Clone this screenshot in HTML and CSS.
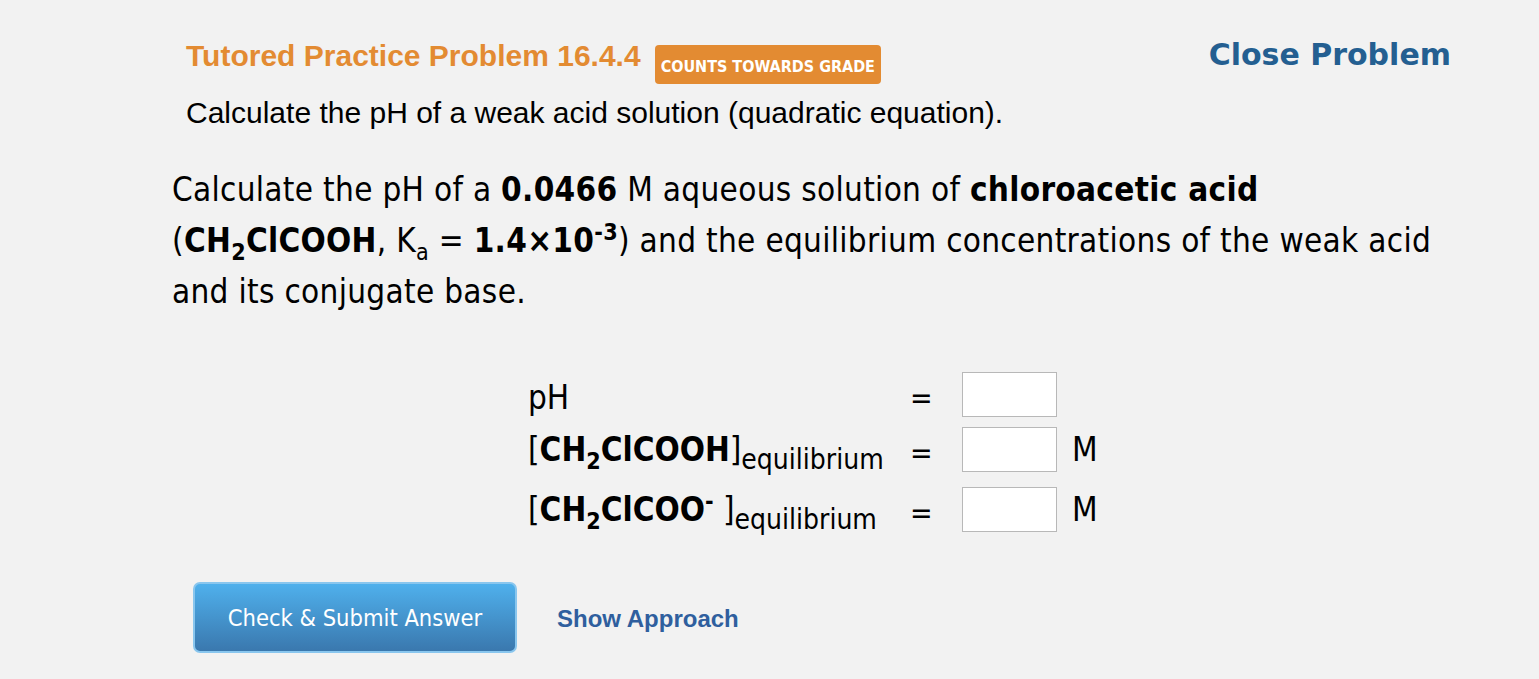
FILE: index.html
```html
<!DOCTYPE html>
<html lang="en">
<head>
    <meta charset="UTF-8">
    <meta name="viewport" content="width=device-width, initial-scale=1.0">
    <title>Tutored Practice Problem 16.4.4</title>
    <link rel="stylesheet" href="styles.css">
</head>
<body>
    <div class="page">
        <div class="header">
            <div class="header-left">
                <div class="title-row">
                    <h1 class="title">Tutored Practice Problem 16.4.4</h1>
                    <span class="badge">COUNTS TOWARDS GRADE</span>
                </div>
                <p class="subtitle">Calculate the pH of a weak acid solution (quadratic equation).</p>
            </div>
            <a class="close-link" href="#">Close Problem</a>
        </div>

        <p class="problem">
            Calculate the pH of a <b>0.0466</b> M aqueous solution of <b>chloroacetic acid</b>
            (<b>CH<sub>2</sub>ClCOOH</b>, K<sub>a</sub> = <b>1.4&times;10<sup>-3</sup></b>) and the equilibrium concentrations of the weak acid
            and its conjugate base.
        </p>

        <div class="answers">
            <div class="answer-row first">
                <span class="label">pH</span>
                <span class="eq">=</span>
                <input type="text" class="answer-box">
                <span class="unit"></span>
            </div>
            <div class="answer-row">
                <span class="label">[<b>CH<sub>2</sub>ClCOOH</b>]<sub class="eqm">equilibrium</sub></span>
                <span class="eq">=</span>
                <input type="text" class="answer-box">
                <span class="unit">M</span>
            </div>
            <div class="answer-row last">
                <span class="label">[<b>CH<sub>2</sub>ClCOO<sup>-</sup></b> ]<sub class="eqm">equilibrium</sub></span>
                <span class="eq">=</span>
                <input type="text" class="answer-box">
                <span class="unit">M</span>
            </div>
        </div>

        <div class="actions">
            <button class="submit-btn">Check &amp; Submit Answer</button>
            <a class="approach-link" href="#">Show Approach</a>
        </div>
    </div>
</body>
</html>
```

FILE: styles.css
```css
body {
    margin: 0;
    padding: 0;
    background-color: #f2f2f2;
    font-family: "Liberation Sans", Arial, sans-serif;
    color: #000;
}

.page {
    padding: 39px 88px 0 172px;
}

.header {
    display: flex;
    justify-content: space-between;
    align-items: flex-start;
    padding-left: 14px;
}

.title-row {
    display: flex;
    align-items: flex-start;
    gap: 14px;
}

.title {
    margin: 0;
    font-size: 30px;
    font-weight: bold;
    color: #e38b32;
}

.badge {
    display: flex;
    align-items: center;
    height: 39px;
    box-sizing: border-box;
    padding: 3px 6px 0;
    margin-top: 6px;
    background-color: #e38b32;
    color: white;
    font-family: "DejaVu Sans Condensed", "DejaVu Sans", sans-serif;
    font-weight: bold;
    font-size: 16px;
    border-radius: 4px;
}

.subtitle {
    margin: 12px 0 0;
    font-size: 30px;
}

.close-link {
    font-family: "DejaVu Sans", Verdana, sans-serif;
    font-weight: bold;
    font-size: 30px;
    color: #245f91;
    text-decoration: none;
    margin-top: -2px;
}

.problem {
    width: 1274px;
    font-family: "DejaVu Sans Condensed", "DejaVu Sans", sans-serif;
    font-size: 33px;
    letter-spacing: 0.3px;
    line-height: 51px;
    margin: 34px 0 0;
}

.problem sub,
.problem sup,
.label sub,
.label sup {
    font-size: 70%;
    line-height: 0;
}

.answers {
    margin: 50px 0 0 356px;
    font-family: "DejaVu Sans Condensed", "DejaVu Sans", sans-serif;
    font-size: 33px;
}

.answer-row {
    display: grid;
    grid-template-columns: 382px 52px 95px 60px;
    align-items: center;
    height: 55px;
}

.answer-row.first .label {
    padding-top: 5px;
}

.answer-row.last {
    margin-top: 5px;
}

.label .eqm {
    font-size: 28px;
}

.eq {
    font-size: 30px;
    padding-top: 6px;
}

.answer-box {
    width: 95px;
    height: 45px;
    box-sizing: border-box;
    border: 1px solid #b8b8b8;
    background: white;
    margin: 0;
}

.unit {
    padding-left: 15px;
}

.actions {
    display: flex;
    align-items: center;
    gap: 40px;
    margin: 45px 0 0 21px;
}

.submit-btn {
    width: 324px;
    height: 71px;
    border: 2px solid #89c6ee;
    border-radius: 7px;
    background: linear-gradient(#4fb0ec, #3a78ae);
    color: white;
    font-family: "DejaVu Sans Condensed", "DejaVu Sans", sans-serif;
    font-size: 23.5px;
    cursor: pointer;
}

.approach-link {
    font-weight: bold;
    font-size: 24px;
    color: #2f5f9e;
    text-decoration: none;
    padding-top: 2px;
}
```
